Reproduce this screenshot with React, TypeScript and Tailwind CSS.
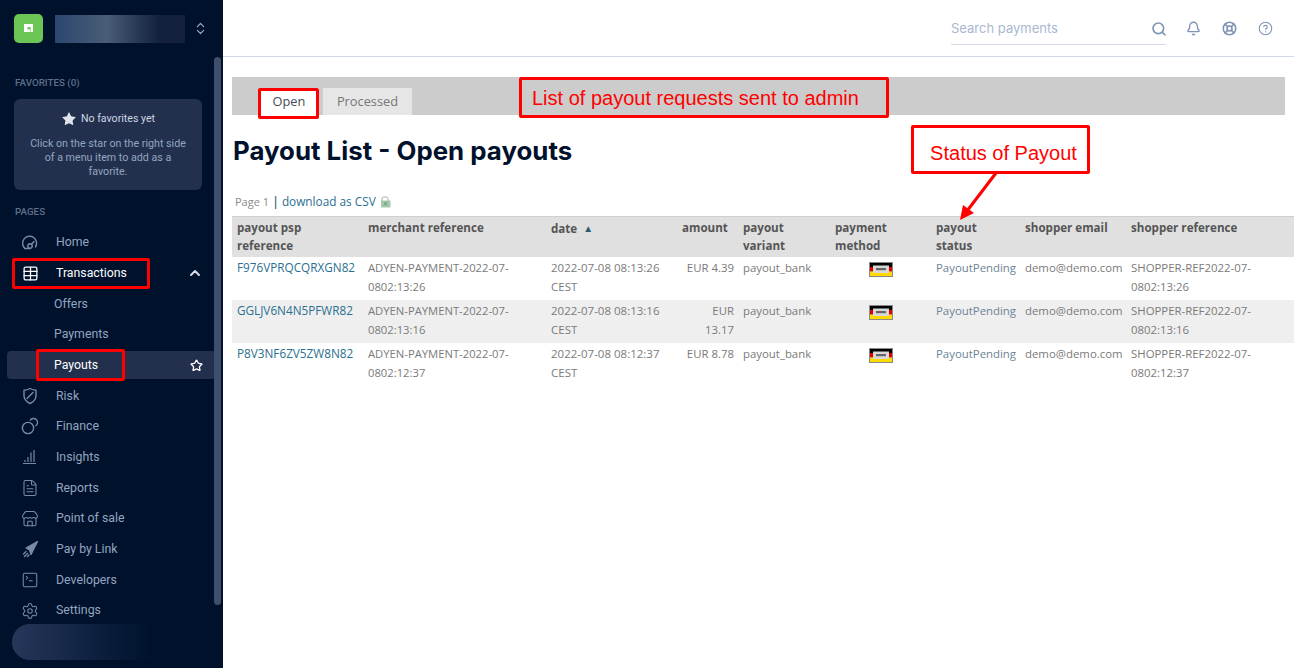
import React from "react";
import { Bell, ChevronUp, ChevronsUpDown, CircleHelp, FileText, LifeBuoy, Search, Settings, SquareTerminal, Star, Store, Table } from "lucide-react";

const Home = () => (
  <svg width="18" height="18" viewBox="0 0 18 18" fill="none" stroke="currentColor" strokeWidth="1.4">
    <path d="M4 15.500A7 7 0 1 1 14.500 14" strokeLinecap="round" />
    <path d="M4 15.500h5" strokeLinecap="round" />
    <circle cx="9" cy="13" r="2.200" />
    <path d="M10.500 11.500l2.500-3" strokeLinecap="round" />
  </svg>
);
const Risk = () => (
  <svg width="18" height="18" viewBox="0 0 18 18" fill="none" stroke="currentColor" strokeWidth="1.4" strokeLinejoin="round">
    <path d="M3 3.200C6 3.200 7.500 2.400 9 1.500c1.500.9 3 1.700 6 1.700v5.300c0 3.800-2.600 6.400-6 8-3.400-1.600-6-4.200-6-8z" />
    <path d="M6 11.500L12 5.500" strokeLinecap="round" />
  </svg>
);
const Finance = () => (
  <svg width="18" height="18" viewBox="0 0 18 18" fill="none" stroke="currentColor" strokeWidth="1.4">
    <circle cx="7" cy="11" r="5.600" />
    <path d="M9 3.600A4 4 0 1 1 14.400 9" />
  </svg>
);
const Insights = () => (
  <svg width="18" height="18" viewBox="0 0 18 18" fill="none" stroke="currentColor" strokeWidth="1.2">
    <path d="M2 15.500h13M4 14v-2M7 14V9M10 14V4.500M13 14V2" />
  </svg>
);
const PayLink = () => (
  <svg width="18" height="18" viewBox="0 0 18 18" fill="none" stroke="currentColor" strokeWidth="1.3" strokeLinejoin="round">
    <path d="M16.500 1.500L5 8l3.500 2 1.500 4.500z" fill="currentColor" />
    <path d="M5 11.500L2.500 14M6.500 13.500l-3 3M8 15l-1.500 1.500" strokeLinecap="round" />
  </svg>
);
const Flag = () => (
  <svg width="24" height="15" viewBox="0 0 24 15" className="inline-block align-top">
    <rect width="24" height="15" fill="#8a8a8a" />
    <rect x="1" y="1" width="22" height="4" fill="#000" />
    <rect x="1" y="5" width="22" height="4.500" fill="#dd0000" />
    <rect x="1" y="9.500" width="22" height="4.500" fill="#ffd900" />
    <rect x="4" y="3.500" width="16" height="7.500" fill="#d8d8d8" />
    <rect x="7" y="6" width="10" height="2.200" fill="#666" />
  </svg>
);
const CsvIcon = () => (
  <svg width="11" height="12" viewBox="0 0 11 12" className="inline-block ml-1 align-[-2px]">
    <path d="M2 5V2.500A1.500 1.500 0 0 1 3.500 1h3A1.500 1.500 0 0 1 8 2.500V5" fill="none" stroke="#aaa" />
    <rect x="1" y="4.500" width="9.500" height="7" fill="#a5c9ad" />
    <path d="M4 6l3 3.500M7 6L4 9.500" stroke="#5f9c6e" />
  </svg>
);

const Row = ({ icon, label, active }: { icon: React.ReactNode; label: string; active?: boolean }) => (
  <div className={`h-[30.7px] flex items-center pl-[21px] ${active ? "text-white" : "text-[#94a5c0]"}`}>
    <span className={`w-[18px] h-[18px] flex items-center justify-center shrink-0 ${active ? "text-white" : "text-[#7a8aa5]"}`}>{icon}</span>
    <span className="ml-[17px] text-[12.3px]">{label}</span>
    {active && <ChevronUp size={16} strokeWidth={3} className="ml-auto mr-[20px] text-[#d5dce8]" />}
  </div>
);
const Sub = ({ label }: { label: string }) => (
  <div className="h-[30.7px] flex items-center pl-[47px] mx-[7px] text-[12.3px] text-[#94a5c0]">{label}</div>
);

const cols = [131, 183, 131, 61, 92, 101, 89, 106, 170];
const rows = [
  ["F976VPRQCQRXGN82", "ADYEN-PAYMENT-2022-07-0802:13:26", "2022-07-08 08:13:26 CEST", "EUR 4.39", "SHOPPER-REF2022-07-0802:13:26"],
  ["GGLJV6N4N5PFWR82", "ADYEN-PAYMENT-2022-07-0802:13:16", "2022-07-08 08:13:16 CEST", "EUR 13.17", "SHOPPER-REF2022-07-0802:13:16"],
  ["P8V3NF6ZV5ZW8N82", "ADYEN-PAYMENT-2022-07-0802:12:37", "2022-07-08 08:12:37 CEST", "EUR 8.78", "SHOPPER-REF2022-07-0802:12:37"],
];
const heads = ["payout psp reference", "merchant reference", "date", "amount", "payout variant", "payment method", "payout status", "shopper email", "shopper reference"];

export default function App() {
  return (
    <div className="relative flex h-[668px] w-[1294px] overflow-hidden bg-white font-['Open_Sans',sans-serif]">
      <aside className="relative w-[223px] shrink-0 bg-[#00112c] font-['Roboto',sans-serif]">
        <div className="h-[57px] flex items-center pl-[14px]">
          <div className="w-[29px] h-[29px] rounded-[5px] bg-[#6cc655] flex items-center justify-center">
            <svg width="10" height="9" viewBox="0 0 10 9">
              <path d="M0 0h9v8H0z" fill="#fff" />
              <path d="M3.500 3h2.500v2.500h-2.500z" fill="#6cc655" />
              <path d="M6 3h1v5H6z" fill="#a6e094" />
            </svg>
          </div>
          <div className="ml-3 w-[130px] h-[28px] bg-gradient-to-r from-[#2b4670] via-[#4a5d76] via-40% to-[#13213d] to-80%" />
          <ChevronsUpDown size={15} strokeWidth={2} className="ml-2 text-[#94a5c0]" />
        </div>
        <div className="pl-[15px] pt-[20px] text-[9.8px] font-medium leading-3 text-[#5e6f8a]">FAVORITES (0)</div>
        <div className="ml-[14px] mt-[10px] w-[188px] h-[91px] rounded-md bg-[#22304d] pt-[12px] px-[10px] text-center">
          <div className="flex items-center justify-center text-[10.6px] leading-4 text-[#cdd6e4]">
            <Star size={16} fill="#dfe4ec" strokeWidth={0} className="mr-[4px] text-[#dfe4ec]" />
            No favorites yet
          </div>
          <p className="mt-[10px] text-[10.7px] leading-[14px] text-[#94a5c0]">Click on the star on the right side of a menu item to add as a favorite.</p>
        </div>
        <div className="pl-[15px] pt-[16px] pb-[9px] text-[9.8px] font-medium leading-3 text-[#5e6f8a]">PAGES</div>
        <nav>
          <Row icon={<Home />} label="Home" />
          <Row icon={<Table size={17} strokeWidth={1.8} />} label="Transactions" active />
          <Sub label="Offers" />
          <Sub label="Payments" />
          <div className="mx-[7px] h-[28px] my-[1.35px] rounded-[4px] bg-[#22304d] flex items-center pl-[47px] pr-[7px] text-[12.3px] text-white">
            Payouts
            <Star size={13} strokeWidth={2.4} className="ml-auto mr-[1px] -translate-x-[5px] text-white" />
          </div>
          <Row icon={<Risk />} label="Risk" />
          <Row icon={<Finance />} label="Finance" />
          <Row icon={<Insights />} label="Insights" />
          <Row icon={<FileText size={18} strokeWidth={1.4} />} label="Reports" />
          <Row icon={<Store size={18} strokeWidth={1.4} />} label="Point of sale" />
          <Row icon={<PayLink />} label="Pay by Link" />
          <Row icon={<SquareTerminal size={18} strokeWidth={1.4} />} label="Developers" />
          <Row icon={<Settings size={18} strokeWidth={1.4} />} label="Settings" />
        </nav>
        <div className="absolute left-[214px] top-[57px] w-[7px] h-[548px] rounded bg-[#3d4f6c]" />
        <div className="absolute left-[12px] top-[624px] w-[140px] h-[36px] rounded-l-full bg-gradient-to-r from-[#27375a] to-[#00112c]" />
      </aside>

      <main className="flex-1 min-w-0 flex flex-col">
        <header className="h-[57px] shrink-0 border-b border-[#d2dbe5] flex items-start justify-end text-[#7f94b4]">
          <div className="mt-[15px] w-[215px] h-[30px] border-b border-[#d2dbe5] flex items-center justify-between pb-[1px]">
            <span className="font-['Inter',sans-serif] text-[13px] text-[#a9b8d0]">Search payments</span>
            <Search size={16} strokeWidth={2.4} className="translate-x-px" />
          </div>
          <div className="mt-[21px] ml-[20px] flex items-center gap-[21px] mr-[21px]">
            <Bell size={15} strokeWidth={2.2} />
            <LifeBuoy size={15} strokeWidth={2.6} />
            <CircleHelp size={15} strokeWidth={1.8} />
          </div>
        </header>
        <div className="flex-1 pt-5 pl-[9px]">
          <div className="h-[38px] w-[1053px] bg-[#cccccc] flex items-end pl-[27px] text-[12.8px] leading-none">
            <div className="w-[60px] h-[27px] bg-white flex items-center justify-center text-[#444c58]">Open</div>
            <div className="ml-[4px] w-[89px] h-[27px] bg-[#e6e6e6] flex items-center justify-center text-[#777]">Processed</div>
          </div>
          <h1 className="mt-[18px] font-['Inter',sans-serif] text-[25.85px] leading-9 font-bold text-[#00112c] pl-px">Payout List - Open payouts</h1>
          <div className="mt-[22px] h-[25px] pl-[3px] text-[12px] leading-5 text-[#8a8a8a]">
            <span className="text-[11px]">Page 1</span> <span className="text-[#1e5f7c] font-semibold">|</span> <span className="text-[11.8px] text-[#2a6f8f]">download as CSV</span>
            <CsvIcon />
          </div>
          <table className="table-fixed border-collapse w-[1064px] text-[11.4px] leading-[19px] text-[#7a7a7a]">
            <colgroup>
              {cols.map((c, i) => (
                <col key={i} style={{ width: c }} />
              ))}
            </colgroup>
            <thead className="bg-[#e0e0e0] border-t border-[#cfcfcf] text-left text-[#555]">
              <tr className="h-[40px]">
                {heads.map((h) => (
                  <th key={h} className="align-top px-[5px] pt-[2px] font-bold text-[11.6px] leading-[18px]">
                    {h}
                    {h === "date" && <span className="ml-[6px] text-[10px] align-[1px] text-[#2a5c72]">▲</span>}
                  </th>
                ))}
              </tr>
            </thead>
            <tbody>
              {rows.map((r, i) => (
                <tr key={r[0]} className={`h-[43px] ${i === 1 ? "bg-[#efefef]" : ""}`}>
                  <td className="align-top px-[5px] pt-[1px] text-[#2a6f8f] text-[11.75px] break-words">{r[0]}</td>
                  <td className="align-top px-[5px] pt-[1px] text-[11.25px] break-words">{r[1]}</td>
                  <td className="align-top px-[5px] pt-[1px] text-[11.5px]">{r[2]}</td>
                  <td className="align-top pl-[5px] pr-[4px] pt-[1px] text-right">{r[3]}</td>
                  <td className="align-top px-[5px] pt-[1px]">payout_bank</td>
                  <td className="align-top pl-[5px] pt-[5px] text-right pr-[38px]"><Flag /></td>
                  <td className="align-top px-[5px] pt-[1px] text-[#6d8396]">PayoutPending</td>
                  <td className="align-top px-[5px] pt-[1px]">demo@demo.com</td>
                  <td className="align-top px-[5px] pt-[1px] break-words">{r[4]}</td>
                </tr>
              ))}
            </tbody>
          </table>
        </div>
      </main>

      <div className="absolute left-[12px] top-[258px] w-[138px] h-[31px] border-[3px] border-[#ff0000] rounded-[2px]" />
      <div className="absolute left-[36px] top-[349px] w-[89px] h-[32px] border-[3px] border-[#ff0000] rounded-[2px]" />
      <div className="absolute left-[258px] top-[88px] w-[61px] h-[31px] border-[3px] border-[#ff0000] rounded-[2px]" />
      <div className="absolute left-[519px] top-[77px] w-[370px] h-[41px] border-[3px] border-[#ff0000] rounded-[2px] font-['Liberation_Sans',sans-serif] text-[20px] leading-[36px] pl-[10px] text-[#ff0000]">
        List of payout requests sent to admin
      </div>
      <div className="absolute left-[911px] top-[125px] w-[179px] h-[49px] border-[3px] border-[#ff0000] rounded-[2px] bg-white pl-[6px] font-['Liberation_Sans',sans-serif] text-[20px] leading-[50px] text-center text-[#ff0000]">
        Status of Payout
      </div>
      <svg className="absolute left-[950px] top-[170px]" width="50" height="54" viewBox="0 0 50 54">
        <path d="M46 3L17 41" stroke="#ff0000" strokeWidth="3" />
        <path d="M10 50L13 35L24 43z" fill="#ff0000" />
      </svg>
    </div>
  );
}
